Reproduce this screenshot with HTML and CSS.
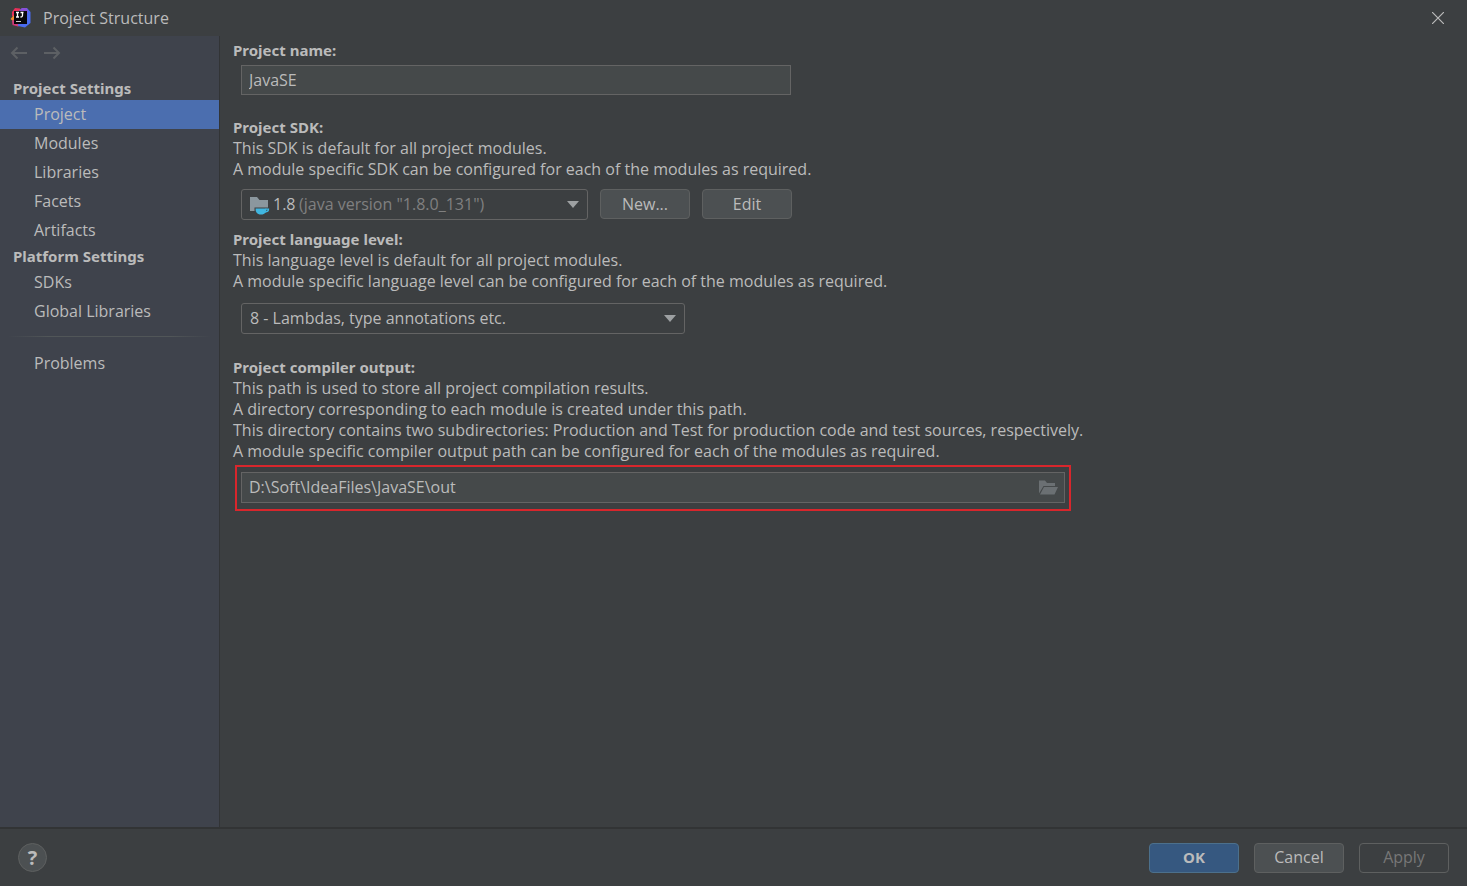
FILE: index.html
```html
<!DOCTYPE html>
<html lang="en">
<head>
  <meta charset="UTF-8">
  <meta name="viewport" content="width=device-width, initial-scale=1.0">
  <title>Project Structure</title>
  <link rel="stylesheet" href="styles.css">
</head>
<body>
  <header class="titlebar">
    <svg class="logo" width="22" height="22" viewBox="0 0 22 22" aria-hidden="true">
      <path d="M2 5 L5 1 L10 1.500 L12 5 L7 13 L2 9 Z" fill="#e8305a"/>
      <path d="M0.500 12 L4 8 L8 14 L4 15 Z" fill="#f58a2c"/>
      <path d="M2 14 L6 11 L12 18 L8 19.500 L2.500 18 Z" fill="#d03a78"/>
      <path d="M9 4 L12 1 L17 1 L20.500 5 L20.500 16 L15 20.500 L8 19 Z" fill="#4a6cf0"/>
      <path d="M9 4 L12 1 L17 1 L18 6 L12 8 Z" fill="#8a50d8"/>
      <rect x="4" y="4" width="13" height="13" fill="#08070c"/>
      <path d="M6 5.500 h3 M7.500 5.500 v4.500 M6 10 h3 M10.500 5.500 h3 M12.500 5.500 v3 q0 1.500 -1.500 1.500 h-0.500" fill="none" stroke="#fff" stroke-width="1.300"/>
      <path d="M6 14.500 h5" stroke="#ccc" stroke-width="1"/>
    </svg>
    <h1>Project Structure</h1>
    <button class="close" aria-label="Close">
      <svg width="12" height="12" viewBox="0 0 12 12"><path d="M0 0 L12 12 M12 0 L0 12" stroke="#bbb" stroke-width="1.200"/></svg>
    </button>
  </header>

  <div class="main">
    <nav class="sidebar">
      <div class="history">
        <button aria-label="Back" disabled>
          <svg width="18" height="14" viewBox="0 0 18 14"><path d="M17 7 H2 M7.500 1.500 L2 7 L7.500 12.500" fill="none" stroke="#5d6064" stroke-width="2"/></svg>
        </button>
        <button aria-label="Forward" disabled>
          <svg width="18" height="14" viewBox="0 0 18 14"><path d="M1 7 H16 M10.500 1.500 L16 7 L10.500 12.500" fill="none" stroke="#5d6064" stroke-width="2"/></svg>
        </button>
      </div>
      <h2>Project Settings</h2>
      <a class="active" href="#project">Project</a>
      <a href="#modules">Modules</a>
      <a href="#libraries">Libraries</a>
      <a href="#facets">Facets</a>
      <a href="#artifacts">Artifacts</a>
      <h2>Platform Settings</h2>
      <a href="#sdks">SDKs</a>
      <a href="#global">Global Libraries</a>
      <hr>
      <a href="#problems">Problems</a>
    </nav>

    <main class="content" id="project">
      <section class="group">
        <label class="heading" for="name">Project name:</label>
        <input class="field name" type="text" id="name" value="JavaSE">
      </section>

      <section class="group sdk">
        <label class="heading" for="sdk">Project SDK:</label>
        <p>This SDK is default for all project modules.</p>
        <p>A module specific SDK can be configured for each of the modules as required.</p>
        <div class="row">
          <div class="combo combo-sdk">
            <select id="sdk"><option>1.8</option></select>
            <svg class="folder" width="20" height="20" viewBox="0 0 20 20" aria-hidden="true">
              <path d="M0 2 h7 l2.500 3 h8.500 v7.500 h-13.500 v3.500 h-4.500 z" fill="#8b979e"/>
              <path d="M5.500 13.500 h11 q0 5 -4 6 h-3 q-4 -1 -4 -6 z" fill="#40b6e0"/>
              <path d="M15.500 14.200 h3 q0 2.500 -3.500 2.800" fill="none" stroke="#40b6e0" stroke-width="1.300"/>
            </svg>
            <span class="version">(java version "1.8.0_131")</span>
            <svg class="arrow" width="12" height="7" viewBox="0 0 12 7" aria-hidden="true"><path d="M0 0 h12 l-6 7 z" fill="#9da0a2"/></svg>
          </div>
          <button class="btn">New...</button>
          <button class="btn">Edit</button>
        </div>
      </section>

      <section class="group level">
        <label class="heading" for="level">Project language level:</label>
        <p>This language level is default for all project modules.</p>
        <p>A module specific language level can be configured for each of the modules as required.</p>
        <div class="row">
          <div class="combo combo-level">
            <select id="level"><option>8 - Lambdas, type annotations etc.</option></select>
            <svg class="arrow" width="12" height="7" viewBox="0 0 12 7" aria-hidden="true"><path d="M0 0 h12 l-6 7 z" fill="#9da0a2"/></svg>
          </div>
        </div>
      </section>

      <section class="group output">
        <label class="heading" for="output">Project compiler output:</label>
        <p>This path is used to store all project compilation results.</p>
        <p>A directory corresponding to each module is created under this path.</p>
        <p>This directory contains two subdirectories: Production and Test for production code and test sources, respectively.</p>
        <p>A module specific compiler output path can be configured for each of the modules as required.</p>
        <div class="highlight">
          <div class="field path">
            <input type="text" id="output" value="D:\Soft\IdeaFiles\JavaSE\out">
            <button aria-label="Browse">
              <svg width="20" height="15" viewBox="0 0 20 15"><path d="M0 0.500 h6 l2 2.500 h8 v3 h-11.500 l-4.500 7.500 z" fill="#6b7073"/><path d="M5 7 h14 l-3.500 7.500 h-14.500 z" fill="#6b7073"/></svg>
            </button>
          </div>
        </div>
      </section>
    </main>
  </div>

  <footer class="footer">
    <button class="help" aria-label="Help">?</button>
    <div class="actions">
      <button class="btn primary">OK</button>
      <button class="btn">Cancel</button>
      <button class="btn" disabled>Apply</button>
    </div>
  </footer>
</body>
</html>
```
FILE: styles.css
```css
* {
  box-sizing: border-box;
}
body {
  margin: 0;
  min-height: 100vh;
  display: flex;
  flex-direction: column;
  background: #3c3f41;
  color: #bbbbbb;
  font: 16px/21px "Open Sans", sans-serif;
}
h1, h2, p {
  margin: 0;
  font-size: inherit;
}
button, input, select {
  font: inherit;
  color: inherit;
}
button {
  padding: 0;
  border: none;
  background: none;
}
svg {
  display: block;
}

/* Title bar */
.titlebar {
  display: flex;
  align-items: center;
  height: 36px;
  padding: 0 22px 0 10px;
}
.titlebar h1 {
  margin-left: 11px;
  font-weight: normal;
}
.close {
  margin-left: auto;
  padding: 0 1px;
}
.main {
  flex: 1;
  display: flex;
}

/* Sidebar */
.sidebar {
  width: 220px;
  flex-shrink: 0;
  background: #3f434c;
  border-right: 1px solid #323436;
}
.history {
  display: flex;
  gap: 15px;
  height: 41px;
  padding: 10px 10px 0;
  align-items: flex-start;
}
.sidebar h2 {
  padding-left: 13px;
  font: bold 15px/23px "Noto Sans", sans-serif;
}
.sidebar a {
  display: block;
  padding-left: 34px;
  line-height: 29px;
  color: inherit;
  text-decoration: none;
}
.sidebar .active {
  background: #4b6eaf;
}
.sidebar hr {
  height: 1px;
  margin: 10px 8px 12px;
  border: none;
  background: linear-gradient(to right, transparent, #515658 20%, #515658 80%, transparent);
}

/* Settings */
.content {
  flex: 1;
  padding: 4px 13px;
}
.group {
  display: flex;
  flex-direction: column;
  align-items: flex-start;
}
.heading {
  font: bold 15px/21px "Noto Sans", sans-serif;
}
.field {
  height: 30px;
  border: 1px solid #646464;
  background: #45494a;
}
.name {
  width: 550px;
  max-width: 100%;
  margin: 4px 0 0 8px;
  padding: 0 7px;
}
.sdk {
  margin-top: 22px;
}
.level {
  margin-top: 9px;
}
.output {
  margin-top: 23px;
}
.row {
  display: flex;
  gap: 12px;
  margin: 9px 0 0 8px;
}
.level .row {
  margin-top: 11px;
}
.combo {
  display: grid;
  grid-template-columns: 24px auto 1fr 12px;
  align-items: center;
  height: 31px;
  padding: 0 8px;
  border: 1px solid #646464;
  border-radius: 3px;
}
.combo > * {
  grid-row: 1;
  pointer-events: none;
}
.combo select {
  grid-column: 1 / -1;
  width: 100%;
  padding: 0;
  border: none;
  outline: none;
  background: transparent;
  appearance: none;
  pointer-events: auto;
}
.combo-sdk {
  width: 347px;
}
.combo-sdk select {
  padding-left: 23px;
}
.combo-level {
  width: 444px;
}
.folder {
  grid-column: 1;
}
.version {
  grid-column: 2;
  padding-left: 25px;
  color: #808080;
}
.arrow {
  grid-column: 4;
}
.btn {
  width: 90px;
  height: 30px;
  border: 1px solid #5e6060;
  border-radius: 4px;
  background: #4c5052;
}
.highlight {
  width: 836px;
  max-width: 100%;
  margin: 3px 0 0 2px;
  padding: 5px 4px 6px;
  border: 2px solid #d8262c;
}
.path {
  display: flex;
  align-items: center;
  height: 31px;
  padding: 0 5px 0 7px;
}
.path input {
  flex: 1;
  padding: 0;
  border: none;
  outline: none;
  background: transparent;
}

/* Bottom bar */
.footer {
  display: flex;
  align-items: center;
  justify-content: space-between;
  height: 59px;
  padding: 0 18px;
  border-top: 2px solid #323435;
}
.help {
  width: 29px;
  height: 29px;
  border: 1px solid #5e6060;
  border-radius: 50%;
  background: #4c5052;
  font-size: 20px;
  font-weight: bold;
}
.actions {
  display: flex;
  gap: 15px;
}
.primary {
  border-color: #4c708c;
  background: #365880;
  font: bold 15px/21px "Noto Sans", sans-serif;
}
.btn:disabled {
  background: transparent;
  color: #777777;
}
```
